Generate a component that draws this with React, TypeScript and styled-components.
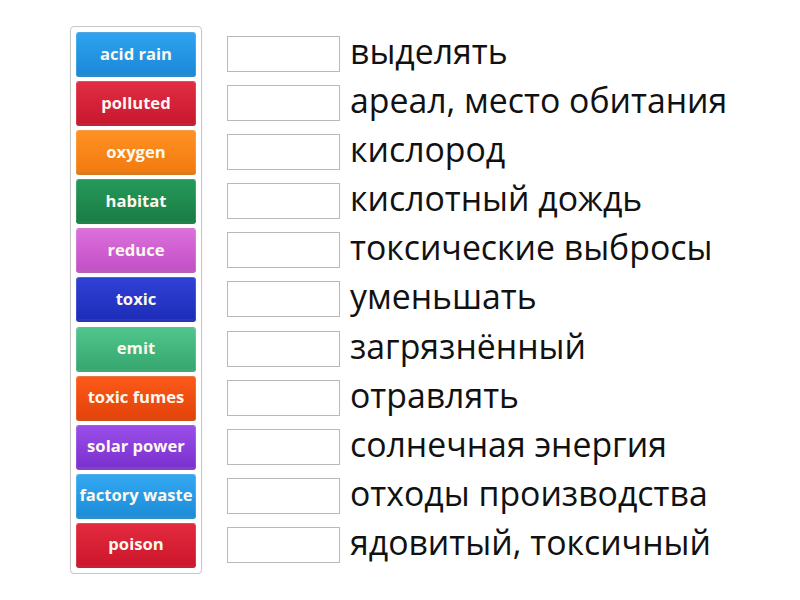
import React from "react";
import styled, { createGlobalStyle } from "styled-components";

const Global = createGlobalStyle`
    html, body {
        margin: 0;
        padding: 0;
        background: #fff;
        font-family: "Open Sans", "Liberation Sans", sans-serif;
    }
`;

const Page = styled.div`
    display: flex;
    align-items: flex-start;
    padding: 26px 0 0 70px;
    gap: 25px;
`;

const Panel = styled.div`
    display: flex;
    flex-direction: column;
    gap: 4.1px;
    width: 120px;
    padding: 5px;
    border: 1px solid #c8c8c8;
    border-radius: 4px;
    box-shadow: 0 1px 2px rgba(0, 0, 0, 0.08);
`;

const Tile = styled.div<{ $top: string; $bottom: string }>`
    display: flex;
    align-items: center;
    justify-content: center;
    height: 45px;
    box-sizing: border-box;
    border-radius: 3px;
    background: linear-gradient(${p => p.$top}, ${p => p.$bottom});
    border-top: 1px solid rgba(255, 255, 255, 0.25);
    border-bottom: 3px solid rgba(0, 0, 0, 0.14);
    box-shadow: inset 1px 0 0 rgba(255, 255, 255, 0.15), inset -1px 0 0 rgba(255, 255, 255, 0.15);
    color: #fdf8ef;
    font-weight: 700;
    font-size: 16.6px;
    padding-bottom: 1px;
    white-space: nowrap;
`;

const Answers = styled.div`
    display: flex;
    flex-direction: column;
    gap: 13.1px;
    padding-top: 10px;
`;

const Row = styled.div`
    display: flex;
    align-items: center;
    gap: 10px;
    height: 36px;
`;

const Slot = styled.div`
    width: 113px;
    height: 36px;
    box-sizing: border-box;
    border: 1px solid #b9b9b9;
    background: #fff;
    flex: none;
`;

const Word = styled.div`
    font-size: 33.8px;
    color: #111;
    line-height: 36px;
    white-space: nowrap;
    margin-top: -6px;
`;

const tiles = [
    { text: "acid rain", top: "#2ea3f0", bottom: "#1b89d8" },
    { text: "polluted", top: "#e12c42", bottom: "#c9192f" },
    { text: "oxygen", top: "#ff9124", bottom: "#f27b0f" },
    { text: "habitat", top: "#25995a", bottom: "#1a7d45" },
    { text: "reduce", top: "#dc6fdc", bottom: "#c451c7" },
    { text: "toxic", top: "#2f42d6", bottom: "#1e2db9" },
    { text: "emit", top: "#50c68d", bottom: "#36a76f" },
    { text: "toxic fumes", top: "#fb5a18", bottom: "#e4430a" },
    { text: "solar power", top: "#9a4ee9", bottom: "#7b31cf" },
    { text: "factory waste", top: "#33a8f1", bottom: "#1d8dda" },
    { text: "poison", top: "#e42a3e", bottom: "#cc172c" },
];

const words = [
    "выделять",
    "ареал, место обитания",
    "кислород",
    "кислотный дождь",
    "токсические выбросы",
    "уменьшать",
    "загрязнённый",
    "отравлять",
    "солнечная энергия",
    "отходы производства",
    "ядовитый, токсичный",
];

export default function App() {
    return (
        <>
            <Global />
            <Page>
                <Panel>
                    {tiles.map(t => (
                        <Tile key={t.text} $top={t.top} $bottom={t.bottom}>{t.text}</Tile>
                    ))}
                </Panel>
                <Answers>
                    {words.map(w => (
                        <Row key={w}>
                            <Slot />
                            <Word>{w}</Word>
                        </Row>
                    ))}
                </Answers>
            </Page>
        </>
    );
}
